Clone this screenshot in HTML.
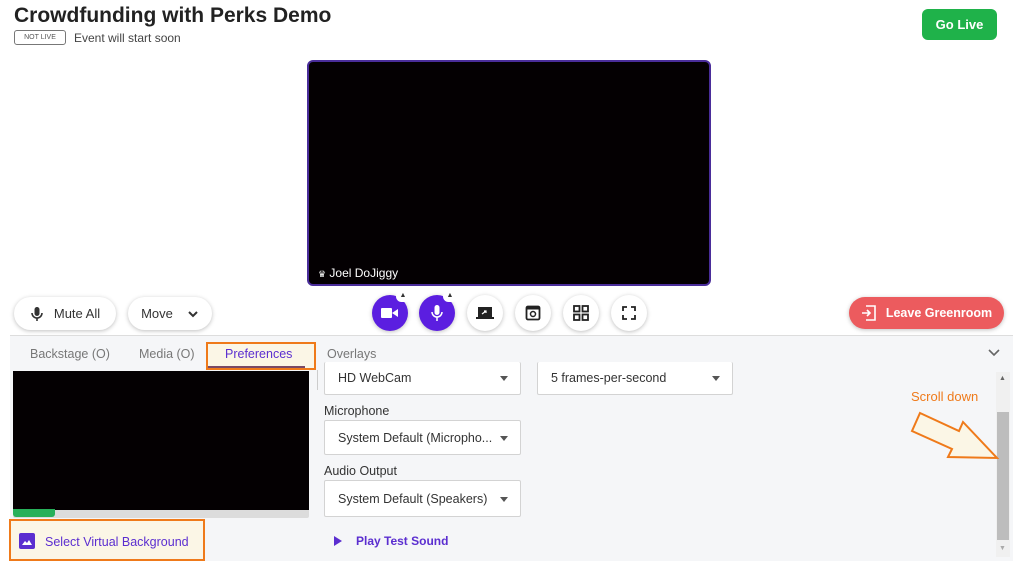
<!DOCTYPE html>
<html><head><meta charset="utf-8"><style>
*{box-sizing:border-box;margin:0;padding:0}
body{width:1024px;height:570px;background:#fff;font-family:"Liberation Sans",sans-serif;position:relative;overflow:hidden;color:#333}
.a{position:absolute}
.btn{position:absolute;background:#fff;border-radius:18px;box-shadow:0 1px 4px rgba(0,0,0,.25);display:flex;align-items:center;justify-content:center;font-size:13px;color:#333}
.circ{position:absolute;width:36px;height:36px;border-radius:50%;background:#fff;box-shadow:0 1px 4px rgba(0,0,0,.25);display:flex;align-items:center;justify-content:center}
.sel{position:absolute;background:#fff;border:1px solid #d3d3d3;border-radius:2px;font-size:12.5px;color:#333;padding-left:13px;display:flex;align-items:center}
.sel:after{content:"";position:absolute;right:12px;top:50%;margin-top:-2px;border:4px solid transparent;border-top:5px solid #555;border-bottom:0}
.lbl{position:absolute;font-size:12.5px;color:#333}
</style></head><body>
<div class="a" style="left:14px;top:4px;font-size:21px;font-weight:bold;color:#222">Crowdfunding with Perks Demo</div>
<div class="a" style="left:14px;top:30px;width:52px;height:15px;border:1px solid #777;border-radius:3px;font-size:7px;color:#555;text-align:center;line-height:13px">NOT LIVE</div>
<div class="a" style="left:74px;top:31px;font-size:12px;color:#444">Event will start soon</div>
<div class="a" style="left:922px;top:9px;width:75px;height:31px;background:#1fb24a;border-radius:6px;color:#fff;font-weight:bold;font-size:13px;display:flex;align-items:center;justify-content:center">Go Live</div>

<div class="a" style="left:307px;top:60px;width:404px;height:226px;background:#040002;border:2px solid #4a2d9a;border-radius:6px"></div>
<div class="a" style="left:318px;top:266px;color:#fff;font-size:12px"><span style="font-size:9px">♛</span> Joel DoJiggy</div>

<div class="btn" style="left:14px;top:297px;width:102px;height:33px"><svg width="14" height="16" viewBox="0 0 14 16" style="margin-right:10px"><rect x="4.5" y="1" width="5" height="9" rx="2.5" fill="#333"/><path d="M2 7a5 5 0 0 0 10 0M7 12v3" stroke="#333" stroke-width="1.6" fill="none"/></svg>Mute All</div>
<div class="btn" style="left:128px;top:297px;width:84px;height:33px">Move<svg width="12" height="10" style="margin-left:14px"><path d="M2 3l4 4 4-4" stroke="#333" stroke-width="2" fill="none"/></svg></div>

<div class="circ" style="left:372px;top:295px;background:#5b1ee0"><svg width="18" height="12"><rect x="0" y="1" width="11" height="10" rx="1" fill="#fff"/><path d="M11 6l6-4v8z" fill="#fff"/></svg></div>
<div class="a" style="left:396px;top:291px;width:14px;height:11px;background:#fff;border-radius:6px;font-size:7px;text-align:center;line-height:9px">▲</div>
<div class="circ" style="left:419px;top:295px;background:#5b1ee0"><svg width="14" height="18"><rect x="4.5" y="1" width="5" height="10" rx="2.5" fill="#fff"/><path d="M2 8a5 5 0 0 0 10 0M7 13v4" stroke="#fff" stroke-width="1.5" fill="none"/></svg></div>
<div class="a" style="left:443px;top:291px;width:14px;height:11px;background:#fff;border-radius:6px;font-size:7px;text-align:center;line-height:9px">▲</div>
<div class="circ" style="left:467px;top:295px"><svg width="20" height="14"><rect x="3" y="1" width="14" height="10" fill="#222"/><rect x="1" y="11" width="18" height="2" fill="#222"/><path d="M7 8l4-3M9 5h2v2" stroke="#fff" stroke-width="1.2" fill="none"/></svg></div>
<div class="circ" style="left:515px;top:295px"><svg width="16" height="16"><rect x="1.5" y="1.5" width="13" height="13" rx="1.5" stroke="#222" stroke-width="1.8" fill="none"/><rect x="1.5" y="1.5" width="13" height="3" fill="#222"/><circle cx="8" cy="9" r="2.5" stroke="#222" stroke-width="1.5" fill="none"/></svg></div>
<div class="circ" style="left:563px;top:295px"><svg width="16" height="16" fill="none" stroke="#222" stroke-width="1.8"><rect x="1" y="1" width="5.5" height="5.5"/><rect x="9.5" y="1" width="5.5" height="5.5"/><rect x="1" y="9.5" width="5.5" height="5.5"/><rect x="9.5" y="9.5" width="5.5" height="5.5"/></svg></div>
<div class="circ" style="left:611px;top:295px"><svg width="14" height="14" fill="none" stroke="#222" stroke-width="1.8"><path d="M1 5V1h4M9 1h4v4M13 9v4H9M5 13H1V9"/></svg></div>

<div class="a" style="left:849px;top:297px;width:155px;height:32px;background:#ec5b5e;border-radius:16px;box-shadow:0 1px 4px rgba(0,0,0,.25);color:#fff;font-size:12.5px;font-weight:bold;display:flex;align-items:center;justify-content:center"><svg width="16" height="16" style="margin-right:9px" fill="none" stroke="#fff" stroke-width="1.6"><path d="M5 1h9v14H5M1 8h8M6 5l3 3-3 3"/></svg>Leave Greenroom</div>

<div class="a" style="left:10px;top:335px;width:1003px;height:226px;background:#f5f6f8;border-top:1px solid #ddd"></div>
<div class="a" style="left:30px;top:347px;font-size:12.5px;color:#777">Backstage (O)</div>
<div class="a" style="left:139px;top:347px;font-size:12.5px;color:#777">Media (O)</div>
<div class="a" style="left:206px;top:342px;width:110px;height:28px;background:#fbf6e6;border:2px solid #ef7a1a"></div>
<div class="a" style="left:225px;top:347px;font-size:12.5px;color:#5b2ed0">Preferences</div>
<div class="a" style="left:208px;top:366px;width:97px;height:2px;background:#7a4a66"></div>
<div class="a" style="left:327px;top:347px;font-size:12.5px;color:#777">Overlays</div>
<svg class="a" style="left:987px;top:348px" width="14" height="10"><path d="M2 2l5 5 5-5" stroke="#666" stroke-width="1.6" fill="none"/></svg>

<div class="a" style="left:13px;top:371px;width:296px;height:147px;background:#dcdcdc;border-radius:2px"></div>
<div class="a" style="left:13px;top:371px;width:296px;height:139px;background:#040002"></div>
<div class="a" style="left:13px;top:509px;width:42px;height:8px;background:#27b05a;border-radius:0 0 3px 3px"></div>

<div class="a" style="left:9px;top:519px;width:196px;height:42px;background:#fbf6e6;border:2px solid #ef7a1a"></div>
<svg class="a" style="left:19px;top:533px" width="16" height="16"><rect width="16" height="16" rx="2" fill="#5b2ed0"/><path d="M3 12l3-4 2 2 2-3 3 5z" fill="#fff"/></svg>
<div class="a" style="left:45px;top:535px;font-size:12.5px;color:#5b2ed0">Select Virtual Background</div>

<div class="a" style="left:317px;top:370px;width:1px;height:20px;background:#ccc"></div>
<div class="sel" style="left:324px;top:362px;width:197px;height:33px;border-top:none">HD WebCam</div>
<div class="sel" style="left:537px;top:362px;width:196px;height:33px;border-top:none">5 frames-per-second</div>
<div class="lbl" style="left:324px;top:404px">Microphone</div>
<div class="sel" style="left:324px;top:420px;width:197px;height:35px">System Default (Micropho...</div>
<div class="lbl" style="left:324px;top:464px">Audio Output</div>
<div class="sel" style="left:324px;top:480px;width:197px;height:37px">System Default (Speakers)</div>
<svg class="a" style="left:333px;top:535px" width="10" height="12"><path d="M1 1l8 5-8 5z" fill="#5b2ed0"/></svg>
<div class="a" style="left:356px;top:534px;font-size:12px;font-weight:bold;color:#5b2ed0">Play Test Sound</div>

<div class="a" style="left:996px;top:372px;width:14px;height:185px;background:#f0f0f0"></div>
<div class="a" style="left:997px;top:412px;width:12px;height:128px;background:#bdbdbd"></div>
<div class="a" style="left:999px;top:375px;font-size:7px;color:#666">▲</div>
<div class="a" style="left:999px;top:545px;font-size:7px;color:#aaa">▼</div>

<div class="a" style="left:911px;top:389px;font-size:13px;color:#ef7a1a">Scroll down</div>
<svg class="a" style="left:0;top:0" width="1024" height="570"><polygon points="920,413 959,431 963,422 997,458 948,457 952,449 912,431" fill="#fbf6e6" stroke="#ef7a1a" stroke-width="2"/></svg>
</body></html>
